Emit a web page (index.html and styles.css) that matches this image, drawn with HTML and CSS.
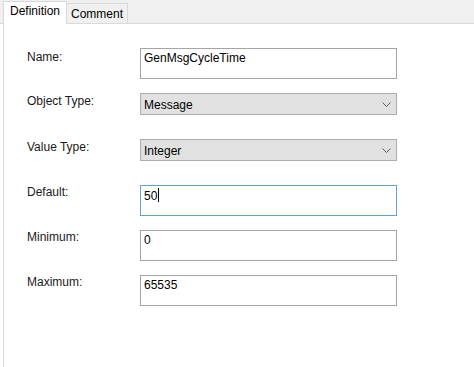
FILE: index.html
```html
<!DOCTYPE html>
<html lang="en">
<head>
    <meta charset="UTF-8">
    <title>Attribute Definition</title>
    <link rel="stylesheet" href="styles.css">
</head>
<body>
    <div class="tabs">
        <div class="tab active">Definition</div>
        <div class="tab">Comment</div>
    </div>
    <div class="panel">
        <div class="row row-name">
            <div class="label">Name:</div>
            <div class="textbox">GenMsgCycleTime</div>
        </div>
        <div class="row row-select">
            <div class="label">Object Type:</div>
            <div class="combo">
                <span>Message</span>
                <svg class="chevron" width="9" height="5" viewBox="0 0 9 5"><polyline points="0.5,0.5 4.5,4.5 8.5,0.5" fill="none" stroke="#606060" stroke-width="1"/></svg>
            </div>
        </div>
        <div class="row row-select">
            <div class="label">Value Type:</div>
            <div class="combo">
                <span>Integer</span>
                <svg class="chevron" width="9" height="5" viewBox="0 0 9 5"><polyline points="0.5,0.5 4.5,4.5 8.5,0.5" fill="none" stroke="#606060" stroke-width="1"/></svg>
            </div>
        </div>
        <div class="row row-text">
            <div class="label">Default:</div>
            <div class="textbox focused">50<span class="caret"></span></div>
        </div>
        <div class="row row-text">
            <div class="label">Minimum:</div>
            <div class="textbox">0</div>
        </div>
        <div class="row row-text">
            <div class="label">Maximum:</div>
            <div class="textbox">65535</div>
        </div>
    </div>
</body>
</html>
```

FILE: styles.css
```css
html, body {
    margin: 0;
    height: 100%;
    overflow: hidden;
}
body {
    font-family: 'Liberation Sans', Arial, sans-serif;
    font-size: 12px;
    color: #000;
    background-color: #fff;
}
.tabs {
    display: flex;
    align-items: flex-end;
    height: 24px;
    padding-left: 3px;
    background-color: #f0f0f0;
    border-bottom: 1px solid #d9d9d9;
    box-sizing: border-box;
}
.tab {
    height: 20px;
    padding: 0 4px 0 4px;
    line-height: 20px;
    border: 1px solid #d9d9d9;
    border-bottom: none;
    border-left: none;
    box-sizing: border-box;
    background-color: #f0f0f0;
}
.tab.active {
    height: 23px;
    margin-bottom: -1px;
    padding: 0 6px 0 6px;
    line-height: 18px;
    border-left: 1px solid #d9d9d9;
    background-color: #fff;
}
.panel {
    margin-left: 3px;
    height: calc(100% - 24px);
    border-left: 1px solid #d9d9d9;
    padding: 24px 0 0 23px;
    box-sizing: border-box;
}
.row {
    display: flex;
    align-items: flex-start;
}
.label {
    width: 113px;
    line-height: 15px;
    padding-top: 2px;
    color: #1a1a1a;
}
.row-name {
    margin-bottom: 14px;
}
.row-select {
    margin-bottom: 24px;
}
.row-select .label {
    padding-top: 1px;
}
.row-text {
    margin-bottom: 14px;
}
.row-text .label {
    padding-top: 0;
}
.textbox {
    width: 257px;
    height: 31px;
    padding: 2px 3px;
    line-height: 15px;
    border: 1px solid #a5a5a5;
    box-sizing: border-box;
    background-color: #fff;
}
.textbox.focused {
    border-color: #5fa3e3;
}
.caret {
    display: inline-block;
    width: 1px;
    height: 14px;
    margin-left: 1px;
    vertical-align: -2px;
    background-color: #000;
}
.combo {
    width: 257px;
    height: 22px;
    padding: 0 3px;
    display: flex;
    align-items: center;
    justify-content: space-between;
    border: 1px solid #adadad;
    box-sizing: border-box;
    background-color: #e1e1e1;
}
.combo span {
    padding-top: 2px;
}
.chevron {
    margin-right: 2px;
}
```
